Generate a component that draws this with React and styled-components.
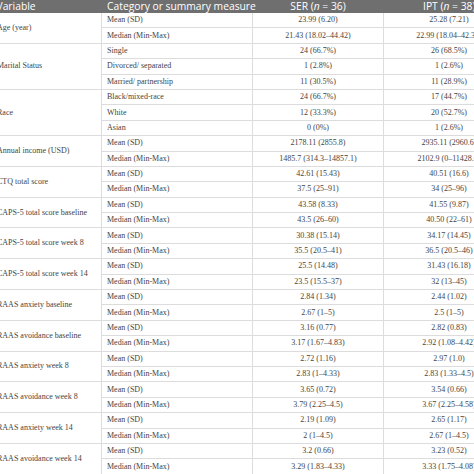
import React from 'react';
import styled, { createGlobalStyle } from 'styled-components';

const Global = createGlobalStyle`
  html, body {
    margin: 0;
    padding: 0;
    background: #ffffff;
    overflow: hidden;
  }
`;

const Page = styled.div`
  width: 474px;
  height: 474px;
  overflow: hidden;
  background: #fff;
`;

const Table = styled.table`
  margin-left: -9px;
  border-collapse: collapse;
  table-layout: fixed;
  width: 523px;
`;

const HeadCell = styled.th`
  background: #6f6f6f;
  color: #ffffff;
  font-family: "Open Sans", "Liberation Sans", sans-serif;
  font-weight: 400;
  font-size: 10.3px;
  height: 13px;
  line-height: 13px;
  padding: 0 5px;
  white-space: nowrap;
  overflow: visible;
  text-align: ${p => (p.$center ? 'center' : 'left')};
  border-left: ${p => (p.$first ? 'none' : '1px solid #6f6f6f')};
`;

const Cell = styled.td`
  font-family: "Liberation Serif", "DejaVu Serif", serif;
  font-size: 8px;
  color: #444444;
  height: 14.4px;
  line-height: 10px;
  padding: 0 5px;
  white-space: nowrap;
  overflow: hidden;
  vertical-align: middle;
  border: 1px solid #dcdcdc;
  border-top: none;
  text-align: ${p => (p.$center ? 'center' : 'left')};
`;

const groups = [
  ['Age (year)', [
    ['Mean (SD)', '23.99 (6.20)', '25.28 (7.21)'],
    ['Median (Min-Max)', '21.43 (18.02–44.42)', '22.99 (18.04–42.33)'],
  ]],
  ['Marital Status', [
    ['Single', '24 (66.7%)', '26 (68.5%)'],
    ['Divorced/ separated', '1 (2.8%)', '1 (2.6%)'],
    ['Married/ partnership', '11 (30.5%)', '11 (28.9%)'],
  ]],
  ['Race', [
    ['Black/mixed-race', '24 (66.7%)', '17 (44.7%)'],
    ['White', '12 (33.3%)', '20 (52.7%)'],
    ['Asian', '0 (0%)', '1 (2.6%)'],
  ]],
  ['Annual income (USD)', [
    ['Mean (SD)', '2178.11 (2855.8)', '2935.11 (2960.6)'],
    ['Median (Min-Max)', '1485.7 (314.3–14857.1)', '2102.9 (0–11428.6)'],
  ]],
  ['CTQ total score', [
    ['Mean (SD)', '42.61 (15.43)', '40.51 (16.6)'],
    ['Median (Min-Max)', '37.5 (25–91)', '34 (25–96)'],
  ]],
  ['CAPS-5 total score baseline', [
    ['Mean (SD)', '43.58 (8.33)', '41.55 (9.87)'],
    ['Median (Min-Max)', '43.5 (26–60)', '40.50 (22–61)'],
  ]],
  ['CAPS-5 total score week 8', [
    ['Mean (SD)', '30.38 (15.14)', '34.17 (14.45)'],
    ['Median (Min-Max)', '35.5 (20.5–41)', '36.5 (20.5–46)'],
  ]],
  ['CAPS-5 total score week 14', [
    ['Mean (SD)', '25.5 (14.48)', '31.43 (16.18)'],
    ['Median (Min-Max)', '23.5 (15.5–37)', '32 (13–45)'],
  ]],
  ['RAAS anxiety baseline', [
    ['Mean (SD)', '2.84 (1.34)', '2.44 (1.02)'],
    ['Median (Min-Max)', '2.67 (1–5)', '2.5 (1–5)'],
  ]],
  ['RAAS avoidance baseline', [
    ['Mean (SD)', '3.16 (0.77)', '2.82 (0.83)'],
    ['Median (Min-Max)', '3.17 (1.67–4.83)', '2.92 (1.08–4.42)'],
  ]],
  ['RAAS anxiety week 8', [
    ['Mean (SD)', '2.72 (1.16)', '2.97 (1.0)'],
    ['Median (Min-Max)', '2.83 (1–4.33)', '2.83 (1.33–4.5)'],
  ]],
  ['RAAS avoidance week 8', [
    ['Mean (SD)', '3.65 (0.72)', '3.54 (0.66)'],
    ['Median (Min-Max)', '3.79 (2.25–4.5)', '3.67 (2.25–4.58)'],
  ]],
  ['RAAS anxiety week 14', [
    ['Mean (SD)', '2.19 (1.09)', '2.65 (1.17)'],
    ['Median (Min-Max)', '2 (1–4.5)', '2.67 (1–4.5)'],
  ]],
  ['RAAS avoidance week 14', [
    ['Mean (SD)', '3.2 (0.66)', '3.23 (0.52)'],
    ['Median (Min-Max)', '3.29 (1.83–4.33)', '3.33 (1.75–4.08)'],
  ]],
];

export default function App() {
  return (
    <Page>
      <Global />
      <Table>
        <colgroup>
          <col style={{ width: 110 }} />
          <col style={{ width: 151 }} />
          <col style={{ width: 131 }} />
          <col style={{ width: 131 }} />
        </colgroup>
        <thead>
          <tr>
            <HeadCell $first>Variable</HeadCell>
            <HeadCell>Category or summary measure</HeadCell>
            <HeadCell $center>SER (<i>n</i> = 36)</HeadCell>
            <HeadCell $center>IPT (<i>n</i> = 38)</HeadCell>
          </tr>
        </thead>
        <tbody>
          {groups.map(([name, rows]) =>
            rows.map((r, i) => (
              <tr key={name + i}>
                {i === 0 && <Cell rowSpan={rows.length}>{name}</Cell>}
                <Cell>{r[0]}</Cell>
                <Cell $center>{r[1]}</Cell>
                <Cell $center>{r[2]}</Cell>
              </tr>
            ))
          )}
        </tbody>
      </Table>
    </Page>
  );
}
